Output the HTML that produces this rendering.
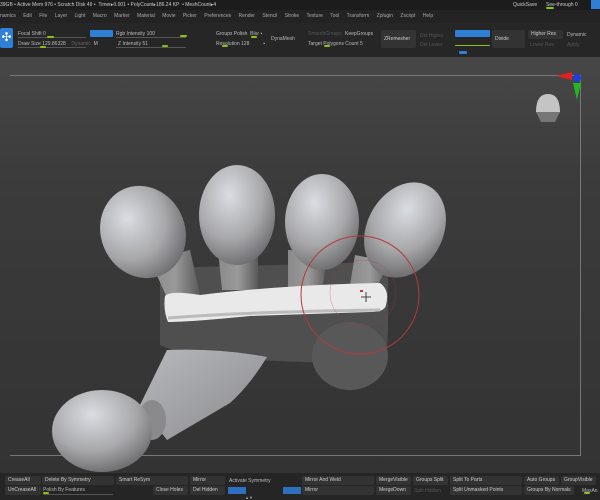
<!DOCTYPE html><html><head><style>
*{margin:0;padding:0;box-sizing:border-box}
body{width:600px;height:500px;overflow:hidden;background:#2a2a2a;font-family:"Liberation Sans",sans-serif;font-size:5px;color:#bbb;position:relative}
.a{position:absolute;white-space:nowrap}
.b{position:absolute;background:#333;border-radius:2px;color:#ccc;padding:1px 3px;height:9px;line-height:7px;font-size:5px}
.s{position:absolute;height:2px;background:#8bc21a;border-radius:1px}
.l{position:absolute;height:1px;background:#555}
</style></head><body>
<div class="a" style="left:0;top:0;width:600px;height:10px;background:#1c1c1c"></div>
<div class="a" style="left:0;top:2px;font-size:5px;color:#ccc">39GB • Active Mem 976 • Scratch Disk 49 • &nbsp;Timer▸0.001 • PolyCount▸186.24 KP &nbsp;• MeshCount▸4</div>
<div class="a" style="left:513px;top:2px;color:#ccc">QuickSave</div>
<div class="a" style="left:546px;top:2px;color:#ccc">See-through 0</div>
<div class="s" style="left:546px;top:7px;width:8px"></div>
<div class="a" style="left:591px;top:0;width:9px;height:9px;background:#2f7fd6"></div>
<div class="a" style="left:0;top:10px;width:600px;height:13px;background:#232323"></div>
<div class="a" style="left:0;top:13px;word-spacing:6px;color:#aaa">namics Edit File Layer Light Macro Marker Material Movie Picker Preferences Render Stencil Stroke Texture Tool Transform Zplugin Zscript Help</div>
<div class="a" style="left:0;top:23px;width:600px;height:34px;background:#262626"></div>
<div class="a" style="left:0;top:28px;width:13px;height:20px;background:#2f7fd6;border-radius:2px;color:#fff;font-size:12px;text-align:center;line-height:18px">✣</div>
<div class="a" style="left:18px;top:31px">Focal Shift 0</div><div class="l" style="left:18px;top:37px;width:68px"></div><div class="s" style="left:47px;top:36px;width:7px"></div>
<div class="a" style="left:18px;top:41px">Draw Size 129.86328 &nbsp;&nbsp;&nbsp;<span style="color:#666">Dynamic</span> &nbsp;M</div><div class="l" style="left:18px;top:47px;width:68px"></div><div class="s" style="left:40px;top:46px;width:6px"></div>
<div class="a" style="left:90px;top:30px;width:23px;height:7px;background:#2f7fd6;border-radius:1px"></div>
<div class="a" style="left:116px;top:31px">Rgb Intensity 100</div><div class="l" style="left:116px;top:37px;width:70px"></div><div class="s" style="left:180px;top:35px;width:7px"></div>
<div class="a" style="left:118px;top:41px">Z Intensity 51</div><div class="l" style="left:116px;top:47px;width:70px"></div><div class="s" style="left:162px;top:45px;width:6px"></div>
<div class="a" style="left:216px;top:31px">Groups Polish &nbsp;Blur ▪</div>
<div class="a" style="left:216px;top:41px">Resolution 128 &nbsp;&nbsp;&nbsp;&nbsp;&nbsp;&nbsp;&nbsp;&nbsp;&nbsp;▪</div><div class="s" style="left:222px;top:45px;width:6px"></div><div class="s" style="left:251px;top:36px;width:6px"></div>
<div class="a" style="left:271px;top:36px">DynaMesh</div>
<div class="a" style="left:308px;top:31px;color:#555">SmoothGroups</div><div class="a" style="left:345px;top:31px">KeepGroups</div>
<div class="a" style="left:308px;top:41px">Target Polygons Count 5</div><div class="s" style="left:324px;top:45px;width:6px"></div>
<div class="b" style="left:381px;top:30px;width:35px;height:18px;line-height:16px">ZRemesher</div>
<div class="a" style="left:420px;top:33px;color:#555">Del Higher</div><div class="a" style="left:420px;top:42px;color:#555">Del Lower</div>
<div class="a" style="left:455px;top:30px;width:35px;height:7px;background:#2f7fd6;border-radius:1px"></div>
<div class="s" style="left:455px;top:45px;width:35px;height:1px"></div>
<div class="b" style="left:492px;top:30px;width:33px;height:18px;line-height:16px">Divide</div>
<div class="b" style="left:528px;top:30px;width:35px">Higher Res</div><div class="a" style="left:530px;top:42px;color:#555">Lower Res</div>
<div class="a" style="left:567px;top:32px">Dynamic</div><div class="a" style="left:567px;top:42px;color:#555">Apply</div>
<div class="a" style="left:459px;top:51px;width:8px;height:3px;background:#2f7fd6;border-radius:1px"></div>
<div class="a" style="left:0;top:57px;width:600px;height:416px;background:linear-gradient(#474747,#3b3b3b 30%,#333 100%)"></div>
<div class="a" style="left:10px;top:75px;width:571px;height:381px;border:1px solid #777;border-left:none"></div>
<svg class="a" style="left:0;top:0" width="600" height="500" viewBox="0 0 600 500">
<defs>
<radialGradient id="g" cx="0.4" cy="0.3" r="0.8"><stop offset="0" stop-color="#dadde3"/><stop offset="0.55" stop-color="#a8a8aa"/><stop offset="1" stop-color="#5e5e60"/></radialGradient>
<linearGradient id="st" x1="0" x2="1"><stop offset="0" stop-color="#8a8a8a"/><stop offset="0.5" stop-color="#9a9a9a"/><stop offset="1" stop-color="#5a5a5a"/></linearGradient>
<linearGradient id="th" x1="0" y1="0" x2="1" y2="1"><stop offset="0" stop-color="#b8b9bd"/><stop offset="1" stop-color="#8a8a8c"/></linearGradient>
</defs>
<path d="M160 268 L388 262 L388 330 L386 365 L250 360 L185 355 L160 345 Z" fill="#4f4f4f"/>
<ellipse cx="350" cy="356" rx="38" ry="34" fill="#585858"/>
<path d="M167 350 Q220 348 267 357 Q250 385 230 403 L167 440 L140 405 Z" fill="url(#th)"/>
<ellipse cx="152" cy="420" rx="14" ry="20" fill="#8a8a8c"/>
<ellipse cx="102" cy="431" rx="50" ry="41" fill="url(#g)"/>
<path d="M150 260 L190 250 L200 295 L168 300 Z" fill="url(#st)"/>
<path d="M218 250 L258 250 L258 290 L222 290 Z" fill="url(#st)"/>
<path d="M288 250 L328 252 L322 290 L288 290 Z" fill="url(#st)"/>
<path d="M355 255 L390 262 L375 290 L350 285 Z" fill="url(#st)"/>
<path d="M165 296 Q170 290 200 295 Q280 285 380 283 Q390 290 386 305 Q385 312 370 312 L250 316 Q190 322 168 322 Q163 310 165 296 Z" fill="#e9e9ea"/>
<path d="M168 318 Q240 312 380 310" stroke="#bbb" stroke-width="3" fill="none"/>
<ellipse cx="143" cy="232" rx="42" ry="47" transform="rotate(-25 143 232)" fill="url(#g)"/>
<ellipse cx="237" cy="215" rx="38" ry="50" fill="url(#g)"/>
<ellipse cx="322" cy="222" rx="37" ry="48" fill="url(#g)"/>
<ellipse cx="405" cy="230" rx="38" ry="50" transform="rotate(28 405 230)" fill="url(#g)"/>
<circle cx="360" cy="295" r="59" fill="none" stroke="#b33a3a" stroke-width="1"/>
<circle cx="363" cy="293" r="33" fill="none" stroke="#b33a3a" stroke-width="0.5" opacity="0.5"/>
<path d="M366 292v10M361 297h10" stroke="#444" stroke-width="1"/>
<rect x="360" y="290" width="3" height="2" fill="#c33"/>
<path d="M536 112 Q536 94 548 94 Q560 94 560 112 Z" fill="#c4c4c4"/>
<path d="M536 112 L560 112 L555 122 L541 122 Z" fill="#777"/>
<polygon points="556,76 572,72 572,80" fill="#e32020"/>
<polygon points="573,83 581,83 577,100" fill="#1fb81f"/>
<circle cx="577" cy="78" r="4" fill="#1a3fe0"/>
</svg>
<div class="a" style="left:0;top:473px;width:600px;height:27px;background:#252525"></div>
<div class="b" style="left:5px;top:476px;width:36px">CreaseAll</div>
<div class="b" style="left:42px;top:476px;width:72px">Delete By Symmetry</div>
<div class="b" style="left:116px;top:476px;width:72px">Smart ReSym</div>
<div class="b" style="left:190px;top:476px;width:35px">Mirror</div>
<div class="a" style="left:229px;top:478px">Activate Symmetry</div>
<div class="b" style="left:5px;top:486px;width:36px">UnCreaseAll</div>
<div class="a" style="left:43px;top:487px">Polish By Features</div><div class="s" style="left:43px;top:492px;width:6px"></div><div class="l" style="left:43px;top:494px;width:70px"></div>
<div class="b" style="left:153px;top:486px;width:35px">Close Holes</div>
<div class="b" style="left:190px;top:486px;width:35px">Del Hidden</div>
<div class="a" style="left:228px;top:487px;width:18px;height:7px;background:#2f6fbf"></div>
<div class="a" style="left:283px;top:487px;width:18px;height:7px;background:#2f6fbf"></div>
<div class="b" style="left:302px;top:476px;width:72px">Mirror And Weld</div>
<div class="b" style="left:302px;top:486px;width:72px">Mirror</div>
<div class="b" style="left:376px;top:476px;width:35px">MergeVisible</div>
<div class="b" style="left:376px;top:486px;width:35px">MergeDown</div>
<div class="b" style="left:413px;top:476px;width:35px">Groups Split</div>
<div class="a" style="left:414px;top:488px;color:#555">Split Hidden</div>
<div class="b" style="left:450px;top:476px;width:72px">Split To Parts</div>
<div class="b" style="left:450px;top:486px;width:72px">Split Unmasked Points</div>
<div class="b" style="left:524px;top:476px;width:35px">Auto Groups</div>
<div class="b" style="left:524px;top:486px;width:50px">Groups By Normals</div>
<div class="b" style="left:561px;top:476px;width:35px">GroupVisible</div>
<div class="a" style="left:582px;top:488px">MaxAn</div><div class="s" style="left:584px;top:492px;width:6px"></div>
<div class="a" style="left:245px;top:495px;color:#aaa;font-size:4px">▲▼</div>
</body></html>
